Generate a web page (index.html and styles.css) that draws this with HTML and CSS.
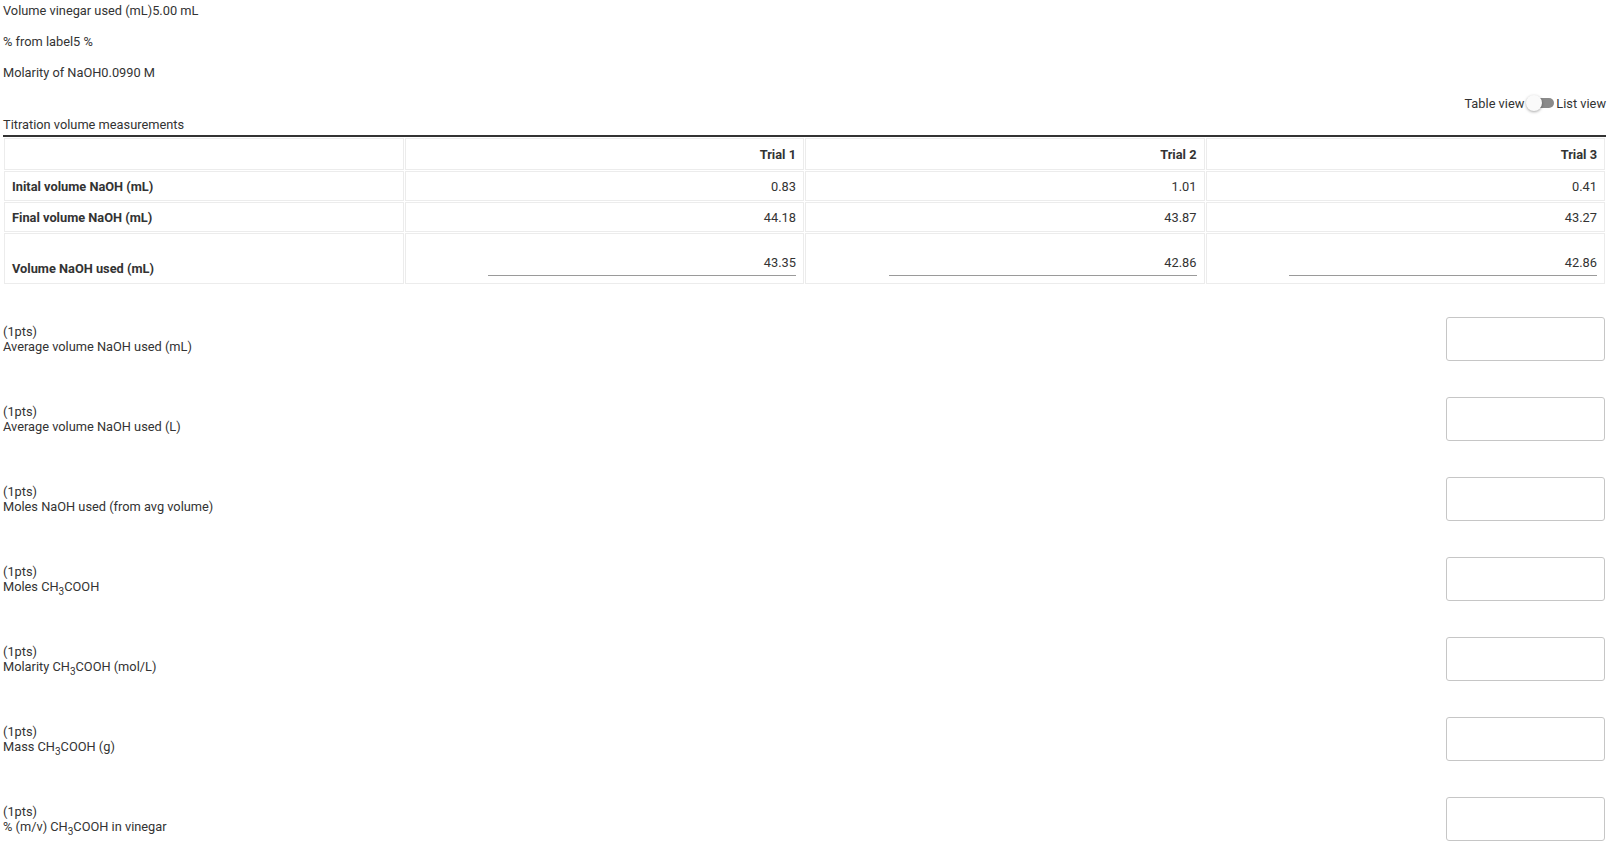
FILE: index.html
```html
<!DOCTYPE html>
<html lang="en">
<head>
<meta charset="utf-8">
<title>Titration</title>
<link rel="stylesheet" href="styles.css">
</head>
<body>
<div class="page">
  <div class="info">
    <p class="info-line"><span>Volume vinegar used (mL)</span><span>5.00 mL</span></p>
    <p class="info-line"><span>% from label</span><span>5 %</span></p>
    <p class="info-line"><span>Molarity of NaOH</span><span>0.0990 M</span></p>
  </div>

  <div class="view-toggle">
    <span class="toggle-label">Table view</span>
    <span class="switch"><span class="switch-track"></span><span class="switch-knob"></span></span>
    <span class="toggle-label">List view</span>
  </div>

  <div class="table-title">Titration volume measurements</div>
  <table class="data-table">
    <thead>
      <tr>
        <th></th>
        <th class="num">Trial 1</th>
        <th class="num">Trial 2</th>
        <th class="num">Trial 3</th>
      </tr>
    </thead>
    <tbody>
      <tr>
        <td class="row-label">Inital volume NaOH (mL)</td>
        <td class="num">0.83</td>
        <td class="num">1.01</td>
        <td class="num">0.41</td>
      </tr>
      <tr>
        <td class="row-label">Final volume NaOH (mL)</td>
        <td class="num">44.18</td>
        <td class="num">43.87</td>
        <td class="num">43.27</td>
      </tr>
      <tr class="calc-row">
        <td class="row-label">Volume NaOH used (mL)</td>
        <td class="num"><div class="calc-field">43.35</div></td>
        <td class="num"><div class="calc-field">42.86</div></td>
        <td class="num"><div class="calc-field">42.86</div></td>
      </tr>
    </tbody>
  </table>

  <div class="questions">
    <div class="question">
      <div class="q-label"><div>(1pts)</div><div>Average volume NaOH used (mL)</div></div>
      <div class="answer-box"></div>
    </div>
    <div class="question">
      <div class="q-label"><div>(1pts)</div><div>Average volume NaOH used (L)</div></div>
      <div class="answer-box"></div>
    </div>
    <div class="question">
      <div class="q-label"><div>(1pts)</div><div>Moles NaOH used (from avg volume)</div></div>
      <div class="answer-box"></div>
    </div>
    <div class="question">
      <div class="q-label"><div>(1pts)</div><div>Moles CH<sub>3</sub>COOH</div></div>
      <div class="answer-box"></div>
    </div>
    <div class="question">
      <div class="q-label"><div>(1pts)</div><div>Molarity CH<sub>3</sub>COOH (mol/L)</div></div>
      <div class="answer-box"></div>
    </div>
    <div class="question">
      <div class="q-label"><div>(1pts)</div><div>Mass CH<sub>3</sub>COOH (g)</div></div>
      <div class="answer-box"></div>
    </div>
    <div class="question">
      <div class="q-label"><div>(1pts)</div><div>% (m/v) CH<sub>3</sub>COOH in vinegar</div></div>
      <div class="answer-box"></div>
    </div>
  </div>
</div>
</body>
</html>
```

FILE: styles.css
```css
html, body {
  margin: 0;
  padding: 0;
  background: #ffffff;
}

body {
  font-family: Roboto, "Liberation Sans", Arial, sans-serif;
  font-size: 12.8px;
  line-height: 15px;
  color: #333333;
}

.page {
  padding: 3px 13px 0 3px;
}

.info-line {
  margin: 0 0 16px;
}

.info-line:last-child {
  margin-bottom: 15px;
}

.view-toggle {
  display: flex;
  justify-content: flex-end;
  align-items: center;
  height: 16px;
  color: #333333;
}

.toggle-label {
  line-height: 15px;
}

.switch {
  position: relative;
  display: inline-block;
  width: 28px;
  height: 16px;
  margin: 0 2px 0 2px;
}

.switch-track {
  position: absolute;
  left: 5px;
  top: 3px;
  width: 23px;
  height: 10px;
  border-radius: 5px;
  background: #8a8a8a;
}

.switch-knob {
  position: absolute;
  left: 0;
  top: 0;
  width: 16px;
  height: 16px;
  border-radius: 50%;
  background: #fafafa;
  box-shadow: 0 1px 3px rgba(0, 0, 0, 0.35);
}

.table-title {
  margin-top: 6px;
  padding-bottom: 3px;
  border-bottom: 2px solid #333333;
}

.data-table {
  width: 100%;
  table-layout: fixed;
  border-collapse: separate;
  border-spacing: 1px;
  font-size: 12.8px;
}

.data-table th,
.data-table td {
  border: 1px solid #ececec;
  padding: 7px 7px 6px;
  line-height: 15px;
}

.data-table th {
  font-weight: bold;
  padding-top: 8px;
  padding-bottom: 7px;
}

.data-table .row-label {
  font-weight: bold;
  text-align: left;
}

.data-table .num {
  text-align: right;
}

.calc-row td {
  vertical-align: bottom;
  padding-bottom: 7px;
}

.calc-field {
  width: 308px;
  margin: 14px 0 0 auto;
  padding: 0 0 5px;
  border-bottom: 1px solid #9a9a9a;
  line-height: 15px;
  text-align: right;
}

.questions {
  padding-top: 32px;
}

.question {
  display: flex;
  justify-content: space-between;
  align-items: center;
  margin-bottom: 36px;
}

.q-label {
  line-height: 15px;
}

.q-label sub {
  font-size: 10px;
  line-height: 0;
}

.answer-box {
  width: 157px;
  height: 42px;
  border: 1px solid #c6c6c6;
  border-radius: 3px;
  margin-right: 1px;
}
```
